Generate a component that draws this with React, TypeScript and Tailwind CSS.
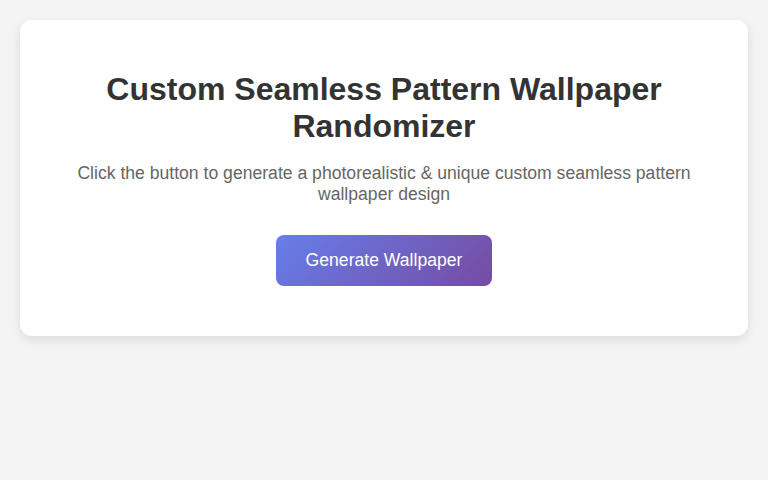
import React from 'react';

const App: React.FC = () => {
  return (
    <div className="min-h-screen bg-[#f4f4f4] p-5 font-['Liberation_Sans',Arial,sans-serif]">
      <div className="bg-white rounded-xl shadow-[0_4px_12px_rgba(0,0,0,0.1)] px-[50px] pt-[51px] pb-[50px] text-center">
        <h1 className="text-[32px] leading-[1.15] font-bold text-[#333] mb-[18px]">
          Custom Seamless Pattern Wallpaper Randomizer
        </h1>
        <p className="text-[17.6px] leading-[21px] text-[#666] mb-[30px]">
          Click the button to generate a photorealistic &amp; unique custom seamless pattern wallpaper design
        </p>
        <button className="text-[17.6px] leading-[21px] text-white px-[30px] py-[15px] rounded-lg bg-[linear-gradient(135deg,#667eea,#764ba2)]">
          Generate Wallpaper
        </button>
      </div>
    </div>
  );
};

export default App;
